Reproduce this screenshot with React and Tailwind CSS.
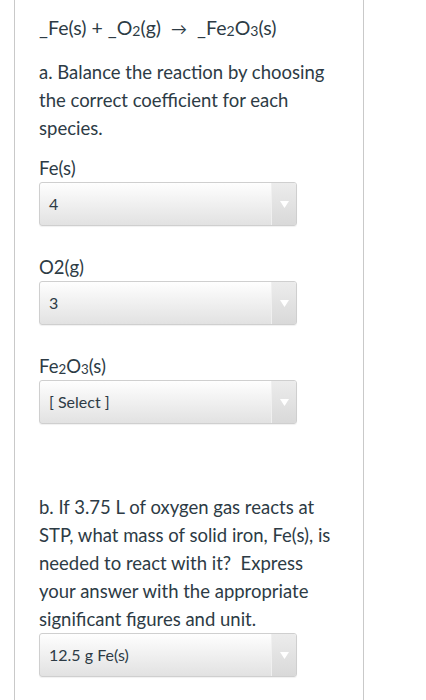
import React from "react";

const font = { fontFamily: "Lato, 'Open Sans', sans-serif" };

const Select = ({ value }) => (
  <div className="flex h-[44px] w-[258px] overflow-hidden rounded-[3px] border border-[#cfcfcf] bg-gradient-to-b from-[#fefefe] to-[#e2e2e2] shadow-[0_1px_1px_rgba(0,0,0,0.06)]">
    <div className="flex flex-1 items-center pl-[9px] text-[16px] text-[#2d3b45]">{value}</div>
    <div className="flex w-[25px] items-center justify-center border-l border-[#f0f0f0] bg-gradient-to-b from-[#ececec] to-[#d9d9d9]">
      <svg width="9" height="7" viewBox="0 0 9 7">
        <polygon points="0,0 9,0 4.5,7" fill="#ffffff" />
      </svg>
    </div>
  </div>
);

const Sub = ({ children }) => (
  <sub className="relative top-[1px] align-baseline text-[0.72em]">{children}</sub>
);

export default function App() {
  return (
    <div className="min-h-[700px] bg-white" style={font}>
      <div className="ml-[14px] min-h-[700px] w-[350px] border-x border-[#c9c9c9] pl-[24px] text-[#2d3b45]">
        {/* equation */}
        <div className="pt-[14px] text-[19.5px] leading-[28px]">
          _Fe(s) + _O<Sub>2</Sub>(g)<span className="mx-[10px] text-[16px]">→</span>_Fe<Sub>2</Sub>O<Sub>3</Sub>(s)
        </div>

        {/* part a */}
        <p className="mt-[15px] w-[300px] text-[18.5px] leading-[28px]">
          a. Balance the reaction by choosing the correct coefficient for each species.
        </p>

        <div className="mt-[12px] text-[18.5px] leading-[28px]">Fe(s)</div>
        <Select value="4" />

        <div className="mt-[27px] text-[18.5px] leading-[28px]">O2(g)</div>
        <Select value="3" />

        <div className="mt-[27px] text-[18.5px] leading-[28px]">
          Fe<Sub>2</Sub>O<Sub>3</Sub>(s)
        </div>
        <Select value="[ Select ]" />

        {/* part b */}
        <p className="mt-[69px] w-[300px] text-[18.5px] leading-[28px]">
          b. If 3.75 L of oxygen gas reacts at STP, what mass of solid iron, Fe(s), is needed to react with it?&nbsp; Express your answer with the appropriate significant figures and unit.
        </p>
        <Select value="12.5 g Fe(s)" />
      </div>
    </div>
  );
}
